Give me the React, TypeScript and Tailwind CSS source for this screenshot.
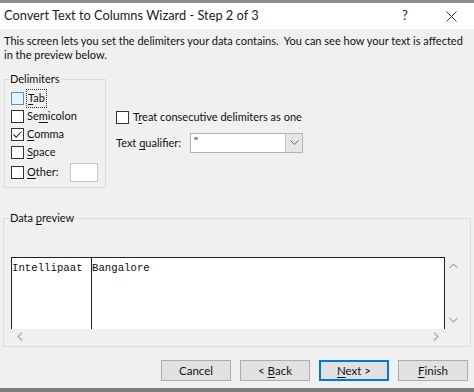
import React from "react";

const U = ({ children }: { children: React.ReactNode }) => <span className="underline underline-offset-[2px]">{children}</span>;

function Box({ checked = false, focus = false }: { checked?: boolean; focus?: boolean }) {
  return (
    <div
      className={
        "w-[13px] h-[13px] border flex items-center justify-center shrink-0 " +
        (focus ? "border-[#5a8fc7] bg-[#e8f2fc]" : "border-[#333333] bg-white")
      }
    >
      {checked && (
        <svg width="11" height="11" viewBox="0 0 11 11">
          <path d="M1.5 5.5 L4.2 8.2 L9.5 2.5" fill="none" stroke="#333" strokeWidth="1.1" />
        </svg>
      )}
    </div>
  );
}

function Row({ children, checked, focus, extra = "" }: { children: React.ReactNode; checked?: boolean; focus?: boolean; extra?: string }) {
  return (
    <div className={"flex items-center h-[18px] gap-[3px] " + extra}>
      <Box checked={checked} focus={focus} />
      {children}
    </div>
  );
}

function Btn({ children, primary }: { children: React.ReactNode; primary?: boolean }) {
  return (
    <div
      className={
        "w-[70px] h-[21px] flex items-center justify-center bg-[#e1e1e1] text-[11.5px] " +
        (primary ? "border-2 border-[#0078d7]" : "border border-[#adadad]")
      }
    >
      <span className="whitespace-pre">{children}</span>
    </div>
  );
}

export default function App() {
  return (
    <div
      className="w-[474px] h-[392px] bg-[#f0f0f0] flex flex-col text-[#111] text-[11px] overflow-hidden"
      style={{ fontFamily: 'Lato, "Noto Sans", sans-serif' }}
    >
      <div className="h-[3px] bg-[#8c8c8c] shrink-0" />
      <div className="h-[26px] bg-white flex items-center pl-[4px] shrink-0 text-[12.8px] text-[#222]">
        <span>Convert Text to Columns Wizard - Step 2 of 3</span>
        <span className="ml-auto text-[13px] w-[10px] mr-[34px]">?</span>
        <svg width="11" height="11" viewBox="0 0 11 11" className="mr-[17px]">
          <path d="M0.5 0.5 L10.5 10.5 M10.5 0.5 L0.5 10.5" stroke="#333" strokeWidth="1" />
        </svg>
      </div>
      <div className="pl-[4px] pt-[5px] leading-[14px] whitespace-pre">
        {"This screen lets you set the delimiters your data contains.  You can see how your text is affected\nin the preview below."}
      </div>
      <div className="flex mt-[9px] ml-[4px]">
        <fieldset className="w-[102px] h-[117px] border border-[#dcdcdc] pl-[6px] pt-[2px]">
          <legend className="ml-[-2px] px-[1px]">Delimiters</legend>
          <Row focus>
            <span className="outline outline-1 outline-dotted outline-[#333] px-[1px]"><U>T</U>ab</span>
          </Row>
          <Row>
            <span>Se<U>m</U>icolon</span>
          </Row>
          <Row checked>
            <span><U>C</U>omma</span>
          </Row>
          <Row>
            <span><U>S</U>pace</span>
          </Row>
          <Row extra="mt-[2px]">
            <span className="w-[40px]"><U>O</U>ther:</span>
            <div className="w-[28px] h-[19px] bg-white border border-[#c8c8c8]" />
          </Row>
        </fieldset>
        <div className="ml-[10px] pt-[39px]">
          <div className="flex items-center h-[14px] gap-[4px]">
            <Box />
            <span>T<U>r</U>eat consecutive delimiters as one</span>
          </div>
          <div className="flex items-center mt-[9px]">
            <span className="w-[74px]">Text <U>q</U>ualifier:</span>
            <div className="w-[113px] h-[20px] bg-white border border-[#b4b4b4] flex">
              <span className="pl-[3px] leading-[14px] flex-1">"</span>
              <div className="w-[17px] h-full bg-[#e6e6e6] border-l border-[#c8c8c8] flex items-center justify-center">
                <svg width="9" height="6" viewBox="0 0 9 6">
                  <path d="M0.5 0.5 L4.5 4.5 L8.5 0.5" fill="none" stroke="#666" strokeWidth="1" />
                </svg>
              </div>
            </div>
          </div>
        </div>
      </div>
      <fieldset className="mt-[22px] ml-[3px] w-[468px] h-[137px] border border-[#dcdcdc] px-[7px]">
        <legend className="ml-[-2px] px-[1px]">Data <U>p</U>review</legend>
        <div className="mt-[30px] flex">
          <div className="w-[434px]">
            <div
              className="h-[72px] bg-white border-l border-t border-r border-[#222] flex text-[10.7px] leading-[14px]"
              style={{ fontFamily: '"Liberation Mono", "Courier New", monospace' }}
            >
              <div className="w-[80px] border-r border-[#222] pt-[3px]">Intellipaat</div>
              <div className="pt-[3px]">Bangalore</div>
            </div>
            <div className="h-[16px] flex items-center justify-between px-[6px]">
              <svg width="6" height="9" viewBox="0 0 6 9"><path d="M5 0.5 L1 4.5 L5 8.5" fill="none" stroke="#aaa" strokeWidth="1.2" /></svg>
              <svg width="6" height="9" viewBox="0 0 6 9"><path d="M1 0.5 L5 4.5 L1 8.5" fill="none" stroke="#aaa" strokeWidth="1.2" /></svg>
            </div>
          </div>
          <div className="w-[17px] h-[72px] flex flex-col items-center justify-between py-[6px]">
            <svg width="9" height="6" viewBox="0 0 9 6"><path d="M0.5 5 L4.5 1 L8.5 5" fill="none" stroke="#aaa" strokeWidth="1.2" /></svg>
            <svg width="9" height="6" viewBox="0 0 9 6"><path d="M0.5 1 L4.5 5 L8.5 1" fill="none" stroke="#aaa" strokeWidth="1.2" /></svg>
          </div>
        </div>
      </fieldset>
      <div className="flex justify-end gap-[9px] pr-[6px] mt-[13px]">
        <Btn>Cancel</Btn>
        <Btn>{"< "}<U>B</U>ack</Btn>
        <Btn primary><U>N</U>ext &gt;</Btn>
        <Btn><U>F</U>inish</Btn>
      </div>
      <div className="mt-auto h-[4px] bg-[#7c7c7c] shrink-0" />
    </div>
  );
}
